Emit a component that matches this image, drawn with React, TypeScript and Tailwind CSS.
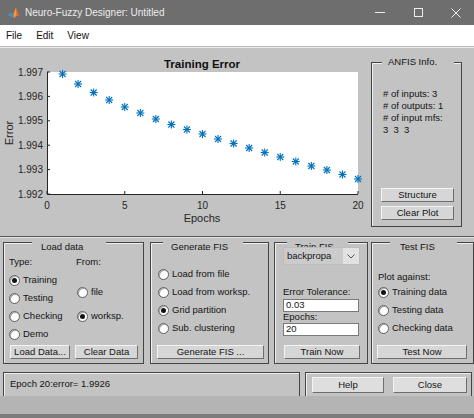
import React from "react";

const ys = [74, 84, 92.5, 100, 107, 113, 119, 124.5, 129.5, 134, 139, 143.5, 148, 152.5, 157, 161.5, 166, 170, 174.5, 179];
const yTicks = [
  { v: "1.997", y: 72 },
  { v: "1.996", y: 96.4 },
  { v: "1.995", y: 120.8 },
  { v: "1.994", y: 145.2 },
  { v: "1.993", y: 169.6 },
  { v: "1.992", y: 194 },
];
const xTicks = [0, 5, 10, 15, 20];

function ErrorPlot() {
  const font = "Liberation Sans, Arial, sans-serif";
  return (
    <svg width="368" height="188" viewBox="0 48 368 188" className="shrink-0" fontFamily={font}>
      <text x="202" y="68" textAnchor="middle" fontSize="11.5" fontWeight="bold" fill="#111">
        Training Error
      </text>
      <rect x="47" y="72" width="311" height="122" fill="#fff" />
      <line x1="47.5" y1="72" x2="47.5" y2="194.5" stroke="#262626" />
      <line x1="47" y1="194.5" x2="358" y2="194.5" stroke="#262626" />
      {yTicks.map((t) => (
        <g key={t.v}>
          <line x1="47" y1={t.y} x2="50" y2={t.y} stroke="#262626" />
          <text x="43" y={t.y + 3.5} textAnchor="end" fontSize="10" fill="#262626">
            {t.v}
          </text>
        </g>
      ))}
      {xTicks.map((t) => {
        const x = 47 + t * 15.55;
        return (
          <g key={t}>
            <line x1={x} y1="191" x2={x} y2="194" stroke="#262626" />
            <text x={x} y="209" textAnchor="middle" fontSize="10" fill="#262626">
              {t}
            </text>
          </g>
        );
      })}
      <text x="202" y="222" textAnchor="middle" fontSize="11" fill="#262626">
        Epochs
      </text>
      <text x="13" y="133" textAnchor="middle" fontSize="11" fill="#262626" transform="rotate(-90 13 133)">
        Error
      </text>
      <g stroke="#0072bd" strokeWidth="1.1">
        {ys.map((y, i) => {
          const x = 47 + (i + 1) * 15.55;
          return (
            <g key={i}>
              <line x1={x - 4} y1={y} x2={x + 4} y2={y} />
              <line x1={x} y1={y - 4} x2={x} y2={y + 4} />
              <line x1={x - 3} y1={y - 3} x2={x + 3} y2={y + 3} />
              <line x1={x - 3} y1={y + 3} x2={x + 3} y2={y - 3} />
            </g>
          );
        })}
      </g>
    </svg>
  );
}

function Btn({ children, className }: { children: React.ReactNode; className?: string }) {
  return (
    <div
      className={`flex items-center justify-center shrink-0 bg-[#d6d6d6] border border-t-[#f4f4f4] border-l-[#f4f4f4] border-r-[#6e6e6e] border-b-[#6e6e6e] leading-none ${className ?? ""}`}
    >
      {children}
    </div>
  );
}

function Radio({ label, on, className }: { label: string; on?: boolean; className?: string }) {
  return (
    <div className={`flex items-center h-[18px] ${className ?? ""}`}>
      <span className="w-[11px] h-[11px] rounded-full bg-white border border-[#5f5f5f] shadow-[inset_1px_1px_0_#a8a8a8] flex items-center justify-center shrink-0">
        {on && <span className="w-[5px] h-[5px] rounded-full bg-[#111]" />}
      </span>
      <span className="ml-[3px] whitespace-nowrap">{label}</span>
    </div>
  );
}

function Title({ text, className }: { text: string; className: string }) {
  return <div className={`-mt-[2px] h-[12px] leading-[12px] w-fit bg-[#c3c3c3] whitespace-nowrap ${className}`}>{text}</div>;
}

const box = "flex flex-col shrink-0 border border-[#444] shadow-[inset_1px_1px_0_#efefef]";

export default function App() {
  return (
    <div className="w-[474px] h-[418px] overflow-hidden bg-[#c3c3c3] text-[9.5px] text-[#141414] font-['Liberation_Sans',Arial,sans-serif]">
      {/* title bar */}
      <div className="h-[25px] bg-[#6e6e6e] flex items-center text-[10px] text-[#ececec]">
        <svg width="13" height="13" viewBox="0 0 13 13" className="ml-[7px]">
          <path d="M0.5 9 L4 6.5 L6.5 8 L9 1.5 L12.5 11 L9.5 9.5 L7 12 Z" fill="#e6622a" />
          <path d="M0.5 9 L4 6.5 L6.5 8 L7 12 Z" fill="#3f8fbf" />
          <path d="M6.5 8 L9 1.5 L9.5 9.5 L7 12 Z" fill="#f29a3c" />
        </svg>
        <span className="ml-[5px]">Neuro-Fuzzy Designer: Untitled</span>
        <div className="ml-auto flex h-full">
          <div className="w-[39px] flex items-center justify-center">
            <span className="w-[10px] h-px bg-[#ececec]" />
          </div>
          <div className="w-[39px] flex items-center justify-center">
            <span className="w-[9px] h-[9px] border border-[#ececec]" />
          </div>
          <div className="w-[36px] flex items-center justify-center">
            <svg width="10" height="10" viewBox="0 0 10 10" stroke="#ececec" strokeWidth="1">
              <path d="M0.5 0.5 L9.5 9.5 M9.5 0.5 L0.5 9.5" />
            </svg>
          </div>
        </div>
      </div>

      {/* menu */}
      <div className="h-[21px] bg-white flex items-center text-[10px] text-[#111]">
        <span className="ml-[6px]">File</span>
        <span className="ml-[14px]">Edit</span>
        <span className="ml-[14px]">View</span>
      </div>
      <div className="h-px bg-[#b9b9b9]" />
      <div className="h-px bg-[#ececec]" />

      {/* plot + ANFIS info */}
      <div className="flex h-[188px]">
        <ErrorPlot />
        <div className={`${box} ml-[3px] mt-[14px] w-[91px] h-[165px]`}>
          <div className="-mt-[7px] ml-[10px] pl-[6px] pr-[17px] h-[12px] leading-[12px] w-fit bg-[#c3c3c3] whitespace-nowrap">
            ANFIS Info.
          </div>
          <div className="mt-[20px] pl-[11px] leading-[12px]">
            <div># of inputs: 3</div>
            <div># of outputs: 1</div>
            <div># of input mfs:</div>
            <div className="whitespace-pre">3  3  3</div>
          </div>
          <Btn className="mt-[52px] ml-[9px] w-[73px] h-[14px]">Structure</Btn>
          <Btn className="mt-[4px] ml-[9px] w-[73px] h-[14px]">Clear Plot</Btn>
        </div>
      </div>

      <div className="h-px bg-[#555]" />
      <div className="h-px bg-[#e4e4e4]" />

      {/* control groups */}
      <div className="flex mt-[4px]">
        <div className={`${box} ml-[3px] w-[141px] h-[122px]`}>
          <Title text="Load data" className="ml-[28px] pl-[9px] pr-[23px]" />
          <div className="flex mt-[3px]">
            <div className="w-[72px] pl-[5px]">
              <div className="h-[12px] leading-[12px]">Type:</div>
              <Radio label="Training" on className="mt-[3px]" />
              <Radio label="Testing" />
              <Radio label="Checking" />
              <Radio label="Demo" />
            </div>
            <div>
              <div className="h-[12px] leading-[12px]">From:</div>
              <Radio label="file" className="mt-[15px] ml-px" />
              <Radio label="worksp." on className="mt-[6px] ml-px" />
            </div>
          </div>
          <div className="flex mt-[2px]">
            <Btn className="ml-[6px] w-[60px] h-[14px]">Load Data...</Btn>
            <Btn className="ml-[5px] w-[63px] h-[14px]">Clear Data</Btn>
          </div>
        </div>

        <div className={`${box} ml-[6px] w-[119px] h-[122px]`}>
          <Title text="Generate FIS" className="ml-[12px] pl-[8px] pr-[15px]" />
          <div className="mt-[12px] pl-[7px]">
            <Radio label="Load from file" />
            <Radio label="Load from worksp." />
            <Radio label="Grid partition" on />
            <Radio label="Sub. clustering" />
          </div>
          <Btn className="mt-[8px] ml-[6px] w-[107px] h-[14px]">Generate FIS ...</Btn>
        </div>

        <div className={`${box} ml-[5px] w-[94px] h-[122px]`}>
          <Title text="Train FIS" className="ml-[12px] pl-[8px] pr-[14px]" />
          <div className="relative z-10 -mt-[6px] ml-[8px] w-[77px] h-[18px] flex bg-[#cbcbcb] border border-[#bdbdbd]">
            <span className="flex-1 pl-[3px] flex items-center">backpropa</span>
            <span className="w-[16px] bg-[#e2e2e2] flex items-center justify-center">
              <svg width="8" height="5" viewBox="0 0 8 5" fill="none" stroke="#555" strokeWidth="1">
                <path d="M0.5 0.5 L4 4 L7.5 0.5" />
              </svg>
            </span>
          </div>
          <div className="mt-[21px] ml-[8px] h-[12px] leading-[12px]">Error Tolerance:</div>
          <div className="mt-[1px] ml-[8px] w-[76px] h-[13px] bg-white border border-[#7a7a7a] pl-[2px] flex items-center">0.03</div>
          <div className="ml-[8px] h-[10px] leading-[10px]">Epochs:</div>
          <div className="mt-[1px] ml-[8px] w-[76px] h-[13px] bg-white border border-[#7a7a7a] pl-[2px] flex items-center">20</div>
          <Btn className="mt-[9px] ml-[9px] w-[76px] h-[14px]">Train Now</Btn>
        </div>

        <div className={`${box} ml-[3px] w-[103px] h-[122px]`}>
          <Title text="Test FIS" className="ml-[18px] pl-[10px] pr-[22px]" />
          <div className="mt-[18px] pl-[6px] h-[12px] leading-[12px]">Plot against:</div>
          <div className="pl-[6px]">
            <Radio label="Training data" on />
            <Radio label="Testing data" />
            <Radio label="Checking data" />
          </div>
          <Btn className="mt-[8px] ml-[5px] w-[90px] h-[14px]">Test Now</Btn>
        </div>
      </div>

      {/* status + help/close */}
      <div className="flex mt-[8px] h-[24px]">
        <div className="ml-[3px] w-[297px] h-full border-t border-l border-r border-[#444] shadow-[inset_1px_1px_0_#efefef] flex items-center pl-[6px]">
          Epoch 20:error= 1.9926
        </div>
        <div className="ml-[5px] w-[167px] h-full border-t border-l border-r border-[#444] shadow-[inset_1px_1px_0_#efefef] flex items-start">
          <Btn className="mt-[4px] ml-[6px] w-[72px] h-[16px] bg-[#dedede]">Help</Btn>
          <Btn className="mt-[4px] ml-[9px] w-[74px] h-[16px] bg-[#dedede]">Close</Btn>
        </div>
      </div>
      <div className="h-[18px] bg-[#b4b4b4]" />
      <div className="h-[4px] bg-[#7c7c7c]" />
    </div>
  );
}
